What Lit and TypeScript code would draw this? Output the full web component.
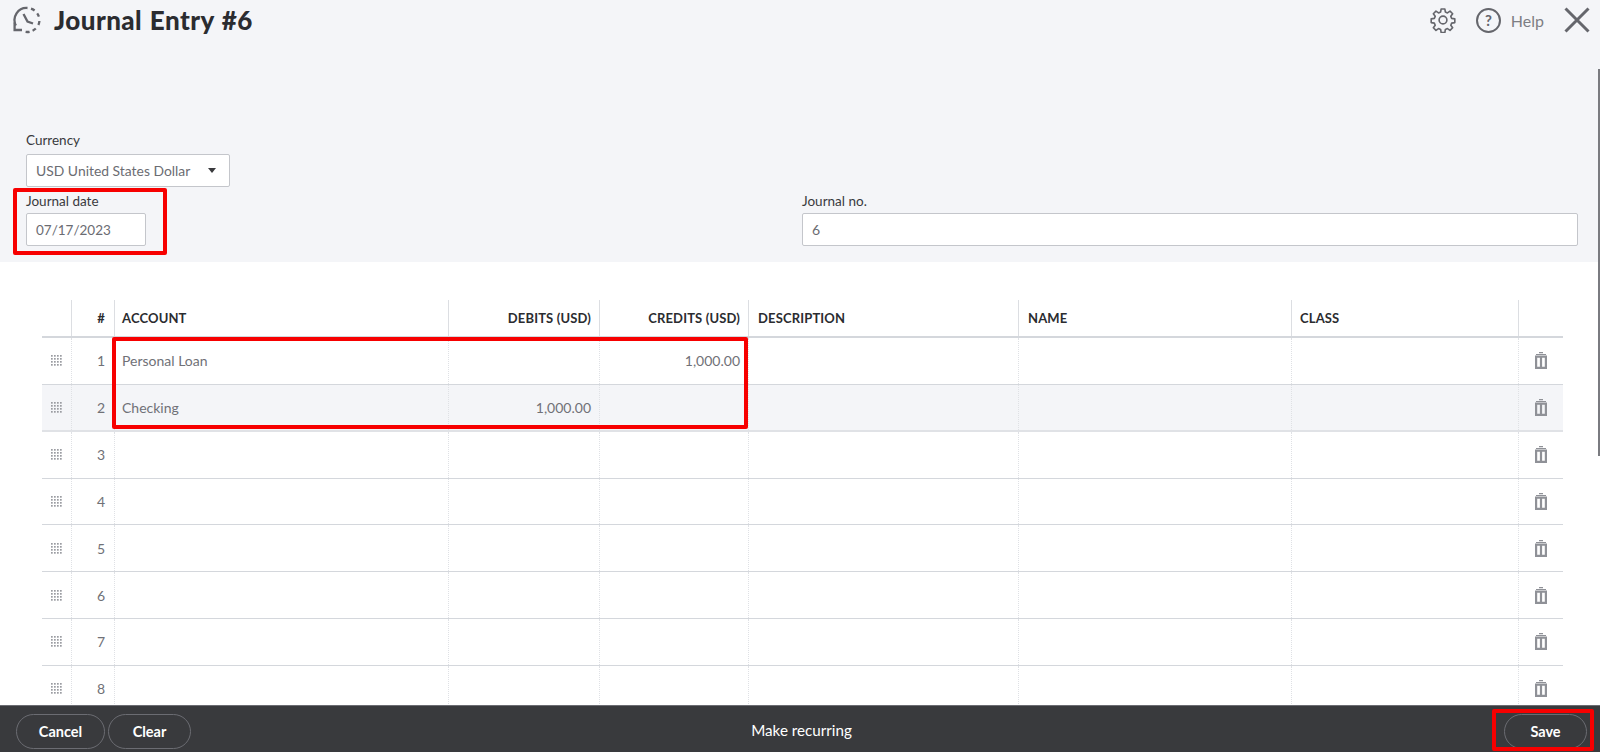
import { LitElement, html, css, svg } from "lit";
import { customElement } from "lit/decorators.js";

const ROWS = [
  { n: 1, account: "Personal Loan", debit: "", credit: "1,000.00" },
  { n: 2, account: "Checking", debit: "1,000.00", credit: "" },
  { n: 3, account: "", debit: "", credit: "" },
  { n: 4, account: "", debit: "", credit: "" },
  { n: 5, account: "", debit: "", credit: "" },
  { n: 6, account: "", debit: "", credit: "" },
  { n: 7, account: "", debit: "", credit: "" },
  { n: 8, account: "", debit: "", credit: "" },
];

const clockIcon = svg`<svg class="clock" width="28" height="28" viewBox="0 0 28 28" fill="none" stroke="#65666c" stroke-width="2.300">
  <path d="M2.900 19.500A12 12 0 0 1 14.500 2" />
  <path d="M18 2.600a12 12 0 0 1 3.600 1.900M24.200 7.400a12 12 0 0 1 1.700 3.300M26.400 15a12 12 0 0 1-1 4M22.800 22.500a12 12 0 0 1-3.200 2.200M16.600 25.800a12 12 0 0 1-4 .1" />
  <path d="M10.500 8 14.500 15.500l5.500 2" />
  <path d="M1.600 16.500v7.500H9" />
</svg>`;

const gearIcon = svg`<svg width="26" height="26" viewBox="0 0 24 24" fill="none" stroke="#65666c" stroke-width="1.500" stroke-linejoin="round">
  <circle cx="12" cy="12" r="3.600" />
  <path d="M10.300 1.800h3.400l.5 2.900 1.900.8 2.400-1.700 2.400 2.400-1.700 2.400.8 1.900 2.900.5v3.400l-2.900.5-.8 1.900 1.700 2.400-2.400 2.400-2.400-1.700-1.900.8-.5 2.900h-3.400l-.5-2.900-1.900-.8-2.400 1.700-2.400-2.400 1.700-2.400-.8-1.900-2.900-.5v-3.400l2.900-.5.8-1.900-1.700-2.400 2.400-2.400 2.400 1.700 1.900-.8z" />
</svg>`;

const closeIcon = svg`<svg width="26" height="26" viewBox="0 0 26 26" fill="none" stroke="#65666c" stroke-width="3">
  <path d="M1.500 1.500 24.500 24.500M24.500 1.500 1.500 24.500" />
</svg>`;

const trashIcon = svg`<svg width="12" height="17" viewBox="0 0 12 17" fill="none" stroke="#8f9197" stroke-width="2.200">
  <path d="M1 2.500h10M4 .7h4" stroke-width="1.200" />
  <path d="M1.100 4.600h9.800V15.900H1.100zM6 4.600V15.900" />
</svg>`;

const gripIcon = svg`<svg width="11" height="11" viewBox="0 0 11 11" fill="#9a9ca1">
  ${[0, 3, 6, 9].flatMap((y) => [0, 3, 6, 9].map((x) => svg`<rect x=${x} y=${y} width="1.700" height="1.700" />`))}
</svg>`;

@customElement("app-root")
export class AppRoot extends LitElement {
  static styles = css`
    :host {
      display: block;
      width: 1600px;
      height: 752px;
      overflow: hidden;
      position: relative;
      background: #fff;
      color: #393a3d;
      font-family: "Lato", "Liberation Sans", sans-serif;
      font-size: 14px;
    }
    .page {
      display: flex;
      flex-direction: column;
      height: 752px;
    }
    .top {
      flex: none;
      height: 262px;
      box-sizing: border-box;
      background: #f4f5f8;
      display: flex;
      flex-direction: column;
    }
    .header {
      display: flex;
      align-items: center;
      height: 40px;
      padding: 0 10px 0 13px;
    }
    h1 {
      margin: 0 0 0 13px;
      font-size: 26px;
      font-weight: 900;
      color: #2b2c30;
      letter-spacing: 0.450px;
      word-spacing: 1px;
      flex: 1;
    }
    .help-icon {
      width: 25px;
      height: 25px;
      border: 2.500px solid #65666c;
      border-radius: 50%;
      box-sizing: border-box;
      display: flex;
      align-items: center;
      justify-content: center;
      font-size: 15px;
      font-weight: 700;
      color: #65666c;
      margin-left: 20px;
    }
    .help-text {
      color: #7d7e84;
      font-size: 16px;
      margin: 0 20px 0 10px;
    }
    .form {
      padding: 92px 22px 0 26px;
    }
    label {
      display: block;
      font-size: 13.500px;
      color: #393a3d;
      line-height: 16px;
      margin-bottom: 4px;
    }
    .currency-label {
      margin-bottom: 6px;
    }
    .control {
      box-sizing: border-box;
      height: 33px;
      background: #fff;
      border: 1px solid #c4c6cb;
      border-radius: 2px;
      display: flex;
      align-items: center;
      padding: 0 9px;
      color: #6b6c72;
      font-size: 14px;
    }
    .currency {
      width: 204px;
      justify-content: space-between;
      padding-right: 13px;
      font-size: 13.900px;
    }
    .caret {
      width: 0;
      height: 0;
      border-left: 4px solid transparent;
      border-right: 4px solid transparent;
      border-top: 5px solid #393a3d;
    }
    .row-fields {
      display: grid;
      grid-template-columns: 776px 776px;
      margin-top: 6px;
    }
    .date {
      width: 120px;
      font-size: 13.500px;
    }
    .table {
      margin: 38px 37px 0 42px;
      flex: none;
    }
    .tr {
      display: grid;
      grid-template-columns: 30px 43px 334px 151px 149px 270px 273px 227px 44px;
      box-sizing: border-box;
      height: 46.850px;
      border-bottom: 1px solid #d4d7dc;
    }
    .tr.even {
      background: #f4f5f8;
      border-bottom: 2px solid #e0e2e6;
    }
    .tr.head {
      height: 38px;
      border-bottom: 2px solid #d4d7dc;
    }
    .td {
      box-sizing: border-box;
      display: flex;
      align-items: center;
      padding: 0 8px;
      border-right: 1px dotted #dfe1e5;
      color: #707177;
      font-size: 14px;
      min-width: 0;
    }
    .head .td {
      color: #2b2c30;
      font-size: 13px;
      font-weight: 700;
      letter-spacing: 0.150px;
      border-right: 1px solid #dcdee2;
    }
    .td.account {
      padding-left: 7px;
    }
    .td.index {
      padding-right: 9px;
    }
    .head .td.description,
    .head .td.name {
      padding-left: 9px;
    }
    .td.num {
      justify-content: flex-end;
    }
    .td.grip,
    .td.trash {
      justify-content: center;
      padding: 0;
    }
    .td.grip {
      padding-right: 1px;
    }
    .td.trash,
    .head .td.trash {
      border-right: 0;
    }
    .spacer {
      flex: 1;
      min-height: 0;
      overflow: hidden;
    }
    .footer {
      flex: none;
      height: 47px;
      box-sizing: border-box;
      background: #393a3d;
      border-top: 1px solid #6b6c72;
      display: grid;
      grid-template-columns: 1fr auto 1fr;
      align-items: center;
      padding: 4px 13px 0 16px;
      color: #fff;
    }
    .footer .left {
      display: flex;
      gap: 3px;
    }
    .footer .right {
      display: flex;
      justify-content: flex-end;
    }
    button {
      height: 35px;
      border-radius: 18px;
      border: 1px solid #6b6c72;
      background: transparent;
      color: #fff;
      font: 700 14.500px "Lato", "Liberation Sans", sans-serif;
      padding: 0;
    }
    .cancel {
      width: 89px;
    }
    .clear,
    .save {
      width: 83px;
    }
    .recurring {
      font-size: 15.200px;
      color: #fff;
      margin-top: -2px;
    }
    .mark {
      position: absolute;
      box-sizing: border-box;
      border: 4px solid #f70000;
      border-radius: 2px;
      pointer-events: none;
    }
    .scrollbar {
      position: absolute;
      right: 0;
      top: 69px;
      width: 2px;
      height: 387px;
      background: #7a7b80;
    }
  `;

  render() {
    return html`
      <div class="page">
        <div class="top">
          <div class="header">
            ${clockIcon}
            <h1>Journal Entry #6</h1>
            ${gearIcon}
            <span class="help-icon">?</span>
            <span class="help-text">Help</span>
            ${closeIcon}
          </div>
          <div class="form">
            <label class="currency-label">Currency</label>
            <div class="control currency">USD United States Dollar<span class="caret"></span></div>
            <div class="row-fields">
              <div>
                <label>Journal date</label>
                <div class="control date">07/17/2023</div>
              </div>
              <div>
                <label>Journal no.</label>
                <div class="control">6</div>
              </div>
            </div>
          </div>
        </div>
        <div class="spacer">
          <div class="table">
            <div class="tr head">
              <div class="td"></div>
              <div class="td num index">#</div>
              <div class="td account">ACCOUNT</div>
              <div class="td num">DEBITS (USD)</div>
              <div class="td num">CREDITS (USD)</div>
              <div class="td description">DESCRIPTION</div>
              <div class="td name">NAME</div>
              <div class="td">CLASS</div>
              <div class="td trash"></div>
            </div>
            ${ROWS.map(
              (r) => html`
                <div class="tr ${r.n === 2 ? "even" : ""}">
                  <div class="td grip">${gripIcon}</div>
                  <div class="td num index">${r.n}</div>
                  <div class="td account">${r.account}</div>
                  <div class="td num">${r.debit}</div>
                  <div class="td num">${r.credit}</div>
                  <div class="td"></div>
                  <div class="td"></div>
                  <div class="td"></div>
                  <div class="td trash">${trashIcon}</div>
                </div>
              `
            )}
          </div>
        </div>
        <div class="footer">
          <div class="left">
            <button class="cancel">Cancel</button>
            <button class="clear">Clear</button>
          </div>
          <div class="recurring">Make recurring</div>
          <div class="right"><button class="save">Save</button></div>
        </div>
      </div>
      <div class="scrollbar"></div>
      <div class="mark" style="left:13px;top:188px;width:154px;height:67px"></div>
      <div class="mark" style="left:112px;top:337px;width:636px;height:92px"></div>
      <div class="mark" style="left:1492px;top:709px;width:102px;height:42px"></div>
    `;
  }
}
